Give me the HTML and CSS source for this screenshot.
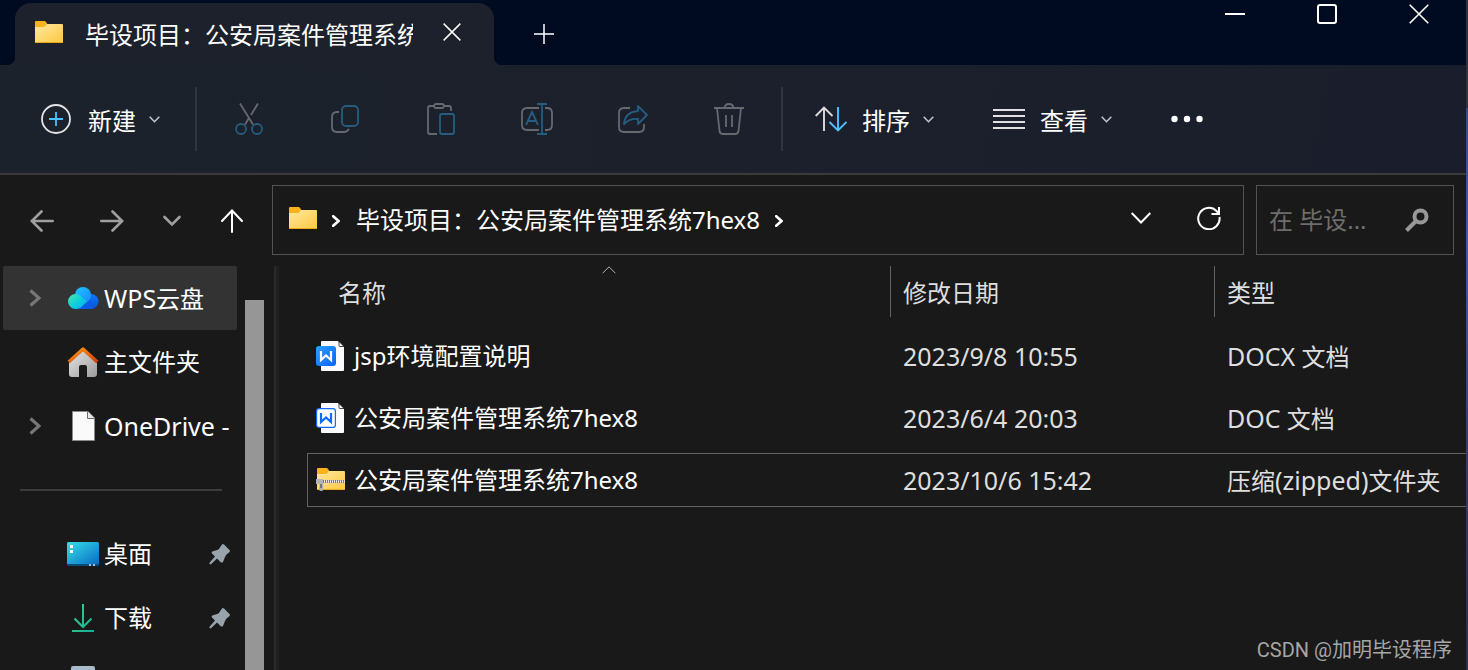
FILE: index.html
```html
<!DOCTYPE html>
<html lang="zh-CN">
<head>
<meta charset="utf-8">
<title>文件资源管理器</title>
<link rel="stylesheet" href="styles.css">
</head>
<body>
<svg class="defs" aria-hidden="true">
  <defs>
    <linearGradient id="gold" x1="0" y1="0" x2="1" y2="1">
      <stop offset="0" stop-color="#ffe8a3"/><stop offset="1" stop-color="#ffc83c"/>
    </linearGradient>
    <linearGradient id="cloudTop" x1="0" y1="0" x2="1" y2="1">
      <stop offset="0" stop-color="#19c6ff"/><stop offset="1" stop-color="#1f86ff"/>
    </linearGradient>
    <linearGradient id="cloudLeft" x1="0" y1="0" x2="1" y2="1">
      <stop offset="0" stop-color="#4be6a8"/><stop offset="0.5" stop-color="#0fd0d8"/><stop offset="1" stop-color="#00a8ff"/>
    </linearGradient>
    <linearGradient id="cloudRight" x1="0" y1="0" x2="0" y2="1">
      <stop offset="0" stop-color="#0a7cf5"/><stop offset="1" stop-color="#0a4fd8"/>
    </linearGradient>
    <linearGradient id="roof" x1="0" y1="0" x2="1" y2="1">
      <stop offset="0" stop-color="#ff9a1a"/><stop offset="1" stop-color="#d83b01"/>
    </linearGradient>
    <linearGradient id="wall" x1="0" y1="0" x2="1" y2="1">
      <stop offset="0" stop-color="#e4e4e4"/><stop offset="1" stop-color="#9c9c9c"/>
    </linearGradient>
    <linearGradient id="screen" x1="0" y1="0" x2="1" y2="1">
      <stop offset="0" stop-color="#35dfe8"/><stop offset="1" stop-color="#0a6cc4"/>
    </linearGradient>
    <linearGradient id="down" x1="0" y1="0" x2="1" y2="1">
      <stop offset="0" stop-color="#3fd08a"/><stop offset="1" stop-color="#14b096"/>
    </linearGradient>
    <linearGradient id="badge" x1="0" y1="0" x2="1" y2="1">
      <stop offset="0" stop-color="#2aa2ff"/><stop offset="1" stop-color="#0a62fa"/>
    </linearGradient>
    <symbol id="folder" viewBox="0 0 28 22">
      <path d="M0 1Q0 0 1 0H9.500Q10.500 0 11 1L13 4 10 6H0Z" fill="#f9b21d"/>
      <path d="M0 6H8.500Q9.500 6 10.300 5L12 3H27Q28 3 28 4V21Q28 22 27 22H1Q0 22 0 21Z" fill="url(#gold)"/>
      <path d="M0 21Q0 22 1 22H27Q28 22 28 21Z" fill="#eaa91f"/>
    </symbol>
    <symbol id="chev-down" viewBox="0 0 11 7">
      <path d="M0.700 0.800 5.500 5.700 10.300 0.800" fill="none" stroke="currentColor" stroke-width="1.500"/>
    </symbol>
    <symbol id="chev-tree" viewBox="0 0 12 18">
      <path d="M1.500 1.500 10 9 1.500 16.500" fill="none" stroke="currentColor" stroke-width="3.200"/>
    </symbol>
    <symbol id="chev-crumb" viewBox="0 0 8 12">
      <path d="M1.200 1.200 6.500 6 1.200 10.800" fill="none" stroke="currentColor" stroke-width="2.600" stroke-linecap="round"/>
    </symbol>
    <symbol id="cross" viewBox="0 0 20 20">
      <path d="M0.700 0.700 19.300 19.300M19.300 0.700 0.700 19.300" fill="none" stroke="currentColor" stroke-width="1.600"/>
    </symbol>
    <symbol id="pin" viewBox="0 0 22 22">
      <path d="M13 1.500Q13.800 0.500 15 1.500L20.500 7Q21.500 8.200 20.500 9L17 12Q15.500 15 14 19Q12.500 20 11.500 19L8 15.500 2 21.300H0.500V19.800L6 13.500 3 10.500Q2 9.500 3.300 8.500L9.500 6.500Z" fill="#98a3ab"/>
    </symbol>
  </defs>
</svg>

<div class="window">
  <header class="titlebar">
    <div class="tab">
      <svg class="folder-icon"><use href="#folder"/></svg>
      <span class="tab-title">毕设项目：公安局案件管理系统7hex8</span>
      <button class="icon-btn tab-close" aria-label="关闭标签页"><svg width="18" height="18"><use href="#cross"/></svg></button>
    </div>
    <button class="icon-btn tab-new" aria-label="新建标签页">
      <svg width="20" height="20" viewBox="0 0 20 20"><path d="M10 0V20M0 10H20" stroke="currentColor" stroke-width="1.500"/></svg>
    </button>
    <div class="window-controls">
      <button class="icon-btn" aria-label="最小化"><svg width="20" height="20" viewBox="0 0 20 20"><path d="M0 10H20" stroke="currentColor" stroke-width="2"/></svg></button>
      <button class="icon-btn" aria-label="最大化"><svg width="20" height="20" viewBox="0 0 20 20"><rect x="1" y="1" width="18" height="18" rx="2" fill="none" stroke="currentColor" stroke-width="2"/></svg></button>
      <button class="icon-btn" aria-label="关闭"><svg width="20" height="20"><use href="#cross"/></svg></button>
    </div>
  </header>

  <div class="toolbar">
    <button class="command">
      <svg width="30" height="30" viewBox="0 0 30 30" fill="none" stroke-width="1.800"><circle cx="15" cy="15" r="14" stroke="#e4e4e6"/><path d="M15 8V22M8 15H22" stroke="#4cc2ff"/></svg>
      <span class="command-label new-label">新建</span>
      <svg class="chev"><use href="#chev-down"/></svg>
    </button>
    <div class="actions">
      <button class="icon-btn" aria-label="剪切" disabled>
        <svg width="28" height="32" viewBox="0 0 28 32" fill="none" stroke-width="1.800"><path d="M5 0.500 18 21.500M23 0.500 16 12M14 15 10 21.500" stroke="#66696f"/><circle cx="6" cy="26" r="5" stroke="#265c80"/><circle cx="22" cy="26" r="5" stroke="#265c80"/></svg>
      </button>
      <button class="icon-btn" aria-label="复制" disabled>
        <svg width="28" height="28" viewBox="0 0 28 28" fill="none" stroke-width="1.800"><rect x="11" y="1" width="16" height="20" rx="4" stroke="#265c80"/><path d="M8 7H6Q1 7 1 12V22Q1 27 6 27H13Q16 27 18 24" stroke="#66696f"/></svg>
      </button>
      <button class="icon-btn" aria-label="粘贴" disabled>
        <svg width="28" height="32" viewBox="0 0 28 32" fill="none" stroke-width="1.800"><path d="M10 31H3Q1 31 1 29V5Q1 3 3 3H7M17 3H22Q24 3 24 5V8" stroke="#66696f"/><rect x="7" y="1" width="10" height="4" rx="2" stroke="#66696f"/><rect x="13" y="11" width="14" height="20" rx="2" stroke="#265c80"/></svg>
      </button>
      <button class="icon-btn" aria-label="重命名" disabled>
        <svg width="32" height="32" viewBox="0 0 32 32" fill="none" stroke-width="1.800"><path d="M18 5H6Q1 5 1 10V22Q1 27 6 27H18M24 5H26Q31 5 31 10V22Q31 27 26 27H24" stroke="#66696f"/><path d="M5 22 11 9 17 22M7 18H15M21 1V31M16 1H26M16 31H26" stroke="#265c80"/></svg>
      </button>
      <button class="icon-btn" aria-label="共享" disabled>
        <svg width="30" height="30" viewBox="0 0 30 30" fill="none" stroke-width="1.800" stroke-linejoin="round"><path d="M12 4H6Q1 4 1 9V23Q1 28 6 28H21Q26 28 26 23V20" stroke="#66696f"/><path d="M20 2 29 11 20 20V15Q12 14 6 20Q7 8 20 7Z" stroke="#265c80"/></svg>
      </button>
      <button class="icon-btn" aria-label="删除" disabled>
        <svg width="30" height="32" viewBox="0 0 30 32" fill="none" stroke="#66696f" stroke-width="1.800"><path d="M0 5H30M10.500 5Q11 1 15 1T19.500 5M3 5 5.500 28Q6 31 9 31H21Q24 31 24.500 28L27 5M12 12V24M18 12V24"/></svg>
      </button>
    </div>
    <div class="commands">
      <button class="command">
        <svg width="32" height="26" viewBox="0 0 32 26" fill="none" stroke-width="1.900"><path d="M9 25V2M0.700 10 9 1.500 17.500 10" stroke="#dcdcde"/><path d="M23 1V24M14.500 16 23 24.500 31.500 16" stroke="#4cc2ff"/></svg>
        <span class="command-label">排序</span>
        <svg class="chev"><use href="#chev-down"/></svg>
      </button>
      <button class="command">
        <svg width="32" height="20" viewBox="0 0 32 20" stroke="#e0e0e2" stroke-width="2"><path d="M0 1H32M0 7H32M0 13H32M0 19H32"/></svg>
        <span class="command-label">查看</span>
        <svg class="chev"><use href="#chev-down"/></svg>
      </button>
      <button class="icon-btn more" aria-label="更多"><svg width="32" height="8" viewBox="0 0 32 8" fill="currentColor"><circle cx="3.500" cy="4" r="3.200"/><circle cx="16" cy="4" r="3.200"/><circle cx="28.500" cy="4" r="3.200"/></svg></button>
    </div>
  </div>

  <div class="navbar">
    <div class="nav-buttons">
      <button class="icon-btn back" aria-label="后退"><svg width="24" height="22" viewBox="0 0 24 22" fill="none" stroke="#a0a0a0" stroke-width="2.600" stroke-linecap="round"><path d="M22.700 11H2M11.500 1.500 1.800 11 11.500 20.500"/></svg></button>
      <button class="icon-btn" aria-label="前进"><svg width="24" height="22" viewBox="0 0 24 22" fill="none" stroke="#a0a0a0" stroke-width="2.600" stroke-linecap="round"><path d="M1.300 11H22M12.500 1.500 22.200 11 12.500 20.500"/></svg></button>
      <button class="icon-btn" aria-label="最近浏览的位置"><svg width="18" height="12" viewBox="0 0 18 12" fill="none" stroke="#a0a0a0" stroke-width="2.600" stroke-linecap="round"><path d="M1.500 2 9 9.500 16.500 2"/></svg></button>
      <button class="icon-btn" aria-label="向上"><svg width="22" height="24" viewBox="0 0 22 24" fill="none" stroke="currentColor" stroke-width="2" stroke-linecap="round"><path d="M11 23V2M1 12 11 1.500 21 12"/></svg></button>
    </div>
    <div class="address">
      <svg class="folder-icon"><use href="#folder"/></svg>
      <svg class="crumb-chev"><use href="#chev-crumb"/></svg>
      <button class="crumb">毕设项目：公安局案件管理系统7hex8</button>
      <svg class="crumb-chev"><use href="#chev-crumb"/></svg>
      <div class="address-tools">
        <button class="icon-btn" aria-label="以前的位置"><svg width="20" height="12" viewBox="0 0 20 12" fill="none" stroke="currentColor" stroke-width="2"><path d="M0.700 1 10 10.500 19.300 1"/></svg></button>
        <button class="icon-btn" aria-label="刷新"><svg width="24" height="24" viewBox="0 0 24 24" fill="none" stroke="currentColor" stroke-width="2"><path d="M22.500 11A10.700 10.700 0 1 1 19.500 5L21.500 7.500M22 1V8H14.500"/></svg></button>
      </div>
    </div>
    <form class="search">
      <input class="search-input" type="text" aria-label="搜索" placeholder="在 毕设...">
      <button class="icon-btn" type="button" aria-label="开始搜索"><svg width="24" height="24" viewBox="0 0 24 24" fill="none" stroke="#979797"><circle cx="15.500" cy="8.500" r="6" stroke-width="4"/><path d="M11 13 1.500 22.500" stroke-width="4"/></svg></button>
    </form>
  </div>

  <div class="content">
    <nav class="sidebar">
      <ul class="tree">
        <li><a class="node selected" href="#">
          <svg class="node-chev"><use href="#chev-tree"/></svg>
          <svg class="node-icon" viewBox="0 0 32 32"><circle cx="24" cy="19.500" r="7.500" fill="url(#cloudRight)"/><path d="M12 27 20 12 26 27Z" fill="#0a5be6"/><circle cx="16" cy="13" r="8" fill="url(#cloudTop)"/><path d="M8.500 12Q12 12 14.500 15L20 19.500 14 25.500Q12 27 8.500 27A7.500 7.500 0 0 1 8.500 12Z" fill="url(#cloudLeft)"/></svg>
          <span class="node-label"><span class="latin">WPS</span>云盘</span>
        </a></li>
        <li><a class="node" href="#">
          <span class="node-chev"></span>
          <svg class="node-icon" viewBox="0 0 32 32"><path d="M16 5 30 17V28Q30 31 27 31H20V21Q20 19 18 19H14Q12 19 12 21V31H5Q2 31 2 28V17Z" fill="url(#wall)"/><path d="M1.700 16 16 3 30.300 16" fill="none" stroke="url(#roof)" stroke-width="3.400" stroke-linejoin="round"/></svg>
          <span class="node-label">主文件夹</span>
        </a></li>
        <li><a class="node" href="#">
          <svg class="node-chev"><use href="#chev-tree"/></svg>
          <svg class="node-icon" viewBox="0 0 32 32"><path d="M5.500 1.500H21L27.500 8V30.500H5.500Z" fill="#fafafa" stroke="#8a8a8a"/><path d="M20.500 1.500V8.500H27.500" fill="#e8e8e8" stroke="#6a6a6a"/></svg>
          <span class="node-label latin">OneDrive -</span>
        </a></li>
        <li class="separator"></li>
        <li><a class="node" href="#">
          <span class="node-chev"></span>
          <svg class="node-icon" viewBox="0 0 32 32"><rect y="4" width="32" height="24" rx="1.500" fill="#0c4a7c"/><path d="M0 5.500Q0 4 1.500 4H30.500Q32 4 32 5.500V26H0Z" fill="url(#screen)"/><path d="M3 7H6V10H3ZM3 12H6V15H3Z" fill="#fff"/><path d="M22 26H24V28H22ZM26 26H28V28H26Z" fill="#9cc4e0"/></svg>
          <span class="node-label">桌面</span>
          <svg class="node-pin"><use href="#pin"/></svg>
        </a></li>
        <li><a class="node" href="#">
          <span class="node-chev"></span>
          <svg class="node-icon" viewBox="0 0 32 32"><path d="M16 2V25M7.500 16.500 16 25 24.500 16.500M5 29H27" fill="none" stroke="url(#down)" stroke-width="2"/></svg>
          <span class="node-label">下载</span>
          <svg class="node-pin"><use href="#pin"/></svg>
        </a></li>
        <li><a class="node" href="#" aria-label="文档">
          <span class="node-chev"></span>
          <svg class="node-icon" viewBox="0 0 32 32"><rect x="4" y="0" width="24" height="32" rx="2" fill="#a9bacb"/></svg>
        </a></li>
      </ul>
      <div class="scroll-thumb"></div>
    </nav>

    <main class="files">
      <table class="file-table">
        <colgroup><col class="col-name"><col class="col-date"><col></colgroup>
        <thead>
          <tr>
            <th><button class="sort-btn name-sort">名称<svg class="sort-mark" width="14" height="8" viewBox="0 0 14 8"><path d="M0.500 7.300 7 0.800 13.500 7.300" fill="none" stroke="#b0b0b0"/></svg></button></th>
            <th><button class="sort-btn">修改日期</button></th>
            <th><button class="sort-btn last-sort">类型</button></th>
          </tr>
        </thead>
        <tbody>
          <tr>
            <td><div class="file"><svg class="file-icon" viewBox="0 0 30 32"><path d="M5 2Q5 1 6 1H22L28 7V30Q28 31 27 31H6Q5 31 5 30Z" fill="#fbfbfd"/><path d="M23 1.500 28 6.500H24Q23 6.500 23 5.500Z" fill="#fff" stroke="#1a1a1a" stroke-width="0.800"/><rect x="0" y="6" width="20" height="20" rx="3" fill="url(#badge)"/><path d="M5 11V20L10 15.500 15 20V11" fill="none" stroke="#fff" stroke-width="2.200"/></svg>jsp环境配置说明</div></td>
            <td class="latin">2023/9/8 10:55</td>
            <td><span class="latin">DOCX</span> 文档</td>
          </tr>
          <tr>
            <td><div class="file"><svg class="file-icon" viewBox="0 0 30 32"><path d="M5 2Q5 1 6 1H22L28 7V30Q28 31 27 31H6Q5 31 5 30Z" fill="#fbfbfd"/><path d="M23 1.500 28 6.500H24Q23 6.500 23 5.500Z" fill="#fff" stroke="#1a1a1a" stroke-width="0.800"/><rect x="0.600" y="6.600" width="18.800" height="18.800" rx="2.500" fill="#fff" stroke="#0f6bff" stroke-width="1.200"/><path d="M5 11V20L10 15.500 15 20V11" fill="none" stroke="#0f6bff" stroke-width="2.200"/></svg>公安局案件管理系统7hex8</div></td>
            <td class="latin">2023/6/4 20:03</td>
            <td><span class="latin">DOC</span> 文档</td>
          </tr>
          <tr class="focused">
            <td><div class="file"><svg class="file-icon" viewBox="0 0 30 32"><use href="#folder" x="1" y="4" width="28" height="22"/><path d="M6 17.500H29" stroke="#8a7a50" stroke-width="3"/><path d="M6 17.500H29" stroke="#f2f2f2" stroke-width="2.400" stroke-dasharray="1 1"/><path d="M0 15H7V18L7.500 26Q5 28 3 26L3.500 20H0Z" fill="#b4b4b4"/><path d="M4 20H6V24H4Z" fill="#777"/></svg>公安局案件管理系统7hex8</div></td>
            <td class="latin">2023/10/6 15:42</td>
            <td>压缩<span class="latin">(zipped)</span>文件夹</td>
          </tr>
        </tbody>
      </table>
    </main>
  </div>
  <div class="watermark">CSDN @加明毕设程序</div>
</div>
</body>
</html>
```

FILE: styles.css
```css
* { box-sizing: border-box; }

body {
  margin: 0;
  padding-right: 2px;
  height: 100vh;
  overflow: hidden;
  background: linear-gradient(#30333d 108px, #344a8c 108px, #3b5ba5 240px, #34396a 480px, #2c2f52);
  color: #fff;
  font: 24px/32px "Noto Sans", "Noto Sans CJK SC", sans-serif;
}

.defs { position: absolute; width: 0; height: 0; }
svg { display: block; flex: none; }
a { color: inherit; text-decoration: none; }

button {
  margin: 0;
  padding: 0;
  border: 0;
  background: none;
  color: inherit;
  font: inherit;
}

.latin { font-size: 25px; }
.icon-btn { display: flex; align-items: center; justify-content: center; }
.folder-icon { width: 28px; height: 22px; }

.window {
  position: relative;
  display: flex;
  flex-direction: column;
  height: 100%;
  background: #191919;
}

/* Title bar */
.titlebar {
  display: flex;
  align-items: flex-end;
  height: 65px;
  padding-left: 15px;
  background: #000a20;
}

.tab {
  position: relative;
  display: flex;
  align-items: center;
  width: 479px;
  height: 62px;
  padding: 0 24px 4px 20px;
  border-radius: 16px 16px 0 0;
  background: #1c212b;
}

.tab::before,
.tab::after {
  content: "";
  position: absolute;
  bottom: 0;
  width: 8px;
  height: 8px;
}
.tab::before { right: 100%; background: radial-gradient(circle at 0 0, #000a20 8px, #1c212b 8px); }
.tab::after { left: 100%; background: radial-gradient(circle at 100% 0, #000a20 8px, #1c212b 8px); }

.tab-title {
  flex: 1;
  margin: 6px 21px 0 22px;
  overflow: hidden;
  white-space: nowrap;
}
.tab-close { width: 36px; height: 36px; }
.tab-new { width: 60px; height: 62px; margin-left: 20px; }

.window-controls {
  display: flex;
  gap: 32px;
  align-self: flex-start;
  margin-left: auto;
  padding-right: 17px;
}
.window-controls .icon-btn { width: 60px; height: 28px; }

/* Command bar */
.toolbar {
  display: flex;
  align-items: center;
  height: 110px;
  padding-left: 41px;
  border-bottom: 2px solid #3a3a3c;
  background: linear-gradient(100deg, #1c222b, #1a1e2c);
}

.command { display: flex; align-items: center; }
.command-label { margin: 4px 13px 0 15px; }
.new-label { margin-left: 17px; }
.chev { width: 11px; height: 7px; color: #c8c8ca; }

.actions {
  display: flex;
  margin: 0 32px 0 35px;
  padding: 0 4px;
  border: solid #30343e;
  border-width: 0 2px;
}
.actions .icon-btn { width: 96px; height: 64px; }
.commands { display: flex; gap: 59px; }

/* Navigation row */
.navbar {
  display: flex;
  gap: 12px;
  padding: 10px 12px 1px 12px;
}
.nav-buttons { display: flex; height: 70px; align-items: center; }
.nav-buttons .icon-btn { width: 60px; height: 64px; padding-top: 2px; }
.nav-buttons .back { margin-right: 10px; }

.address {
  display: flex;
  flex: 1;
  align-items: center;
  height: 70px;
  margin-left: -2px;
  padding: 0 16px;
  border: 1px solid #535353;
}
.crumb-chev { width: 8px; height: 12px; margin: 2px 16px 0 15px; }
.address .folder-icon { margin-bottom: 4px; }
.address-tools { display: flex; margin-left: auto; }
.address-tools .icon-btn { width: 68px; height: 64px; padding-bottom: 4px; }
.address-tools .icon-btn + .icon-btn { margin-right: -16px; }

.search {
  display: flex;
  align-items: center;
  width: 198px;
  height: 70px;
  padding: 0 24px 0 12px;
  border: 1px solid #535353;
}
.search-input {
  flex: 1;
  min-width: 0;
  padding: 0;
  border: 0;
  outline: 0;
  background: none;
  color: #fff;
  font: inherit;
}
.search-input::placeholder { color: #6d6d6d; opacity: 1; }

/* Body */
.content { display: flex; flex: 1; min-height: 0; margin-top: 2px; }

.sidebar {
  display: flex;
  gap: 8px;
  width: 274px;
  padding: 8px 0 0 3px;
  overflow: hidden;
}
.tree { width: 234px; margin: 0; padding: 0; list-style: none; }

.node {
  display: flex;
  align-items: center;
  height: 64px;
  padding: 0 6px 0 26px;
  white-space: nowrap;
}
.selected { border-radius: 2px; background: #333; }
.node-chev { width: 12px; height: 18px; margin-right: 26px; color: #777; }
.node-icon { width: 32px; height: 32px; margin-right: 5px; }
.node-label { flex: 1; }
.node-pin { width: 22px; height: 22px; }

.separator { height: 64px; margin: 0 15px 0 17px; padding-top: 31px; }
.separator::before { content: ""; display: block; height: 2px; background: #3c3c3c; }

.scroll-thumb { width: 19px; margin-top: 34px; background: #969696; }

.files {
  flex: 1;
  min-width: 0;
  padding-left: 33px;
  background: linear-gradient(90deg, #2a2a2a 2px, #202020 2px) 0 8px / 5px 100% no-repeat;
}

.file-table {
  width: 100%;
  table-layout: fixed;
  border-collapse: separate;
  border-spacing: 0 8px;
  text-align: left;
  white-space: nowrap;
}
.col-name { width: 584px; }
.col-date { width: 324px; }

th { height: 55px; padding: 0; vertical-align: top; font-weight: 400; color: #dedede; }
.sort-btn {
  position: relative;
  display: block;
  width: 100%;
  height: 51px;
  padding: 2px 0 0 12px;
  border-right: 1px solid #636363;
  text-align: left;
}
.name-sort { padding-left: 31px; }
.last-sort { border-right: 0; }
.sort-mark { position: absolute; top: 0; left: 50%; margin-left: 3px; }

td { height: 54px; padding: 0 0 0 12px; border: solid transparent; border-width: 1px 0; color: #dedede; }
td:first-child { padding-left: 8px; border-left-width: 1px; color: #fff; }
.focused td { border-color: #636363; }
.file { display: flex; align-items: center; gap: 8px; }
.file-icon { width: 30px; height: 32px; }

.watermark {
  position: absolute;
  right: 14px;
  bottom: 4px;
  color: #a6a6a6;
  font: 20px/32px Roboto, "Noto Sans CJK SC", sans-serif;
}
```
